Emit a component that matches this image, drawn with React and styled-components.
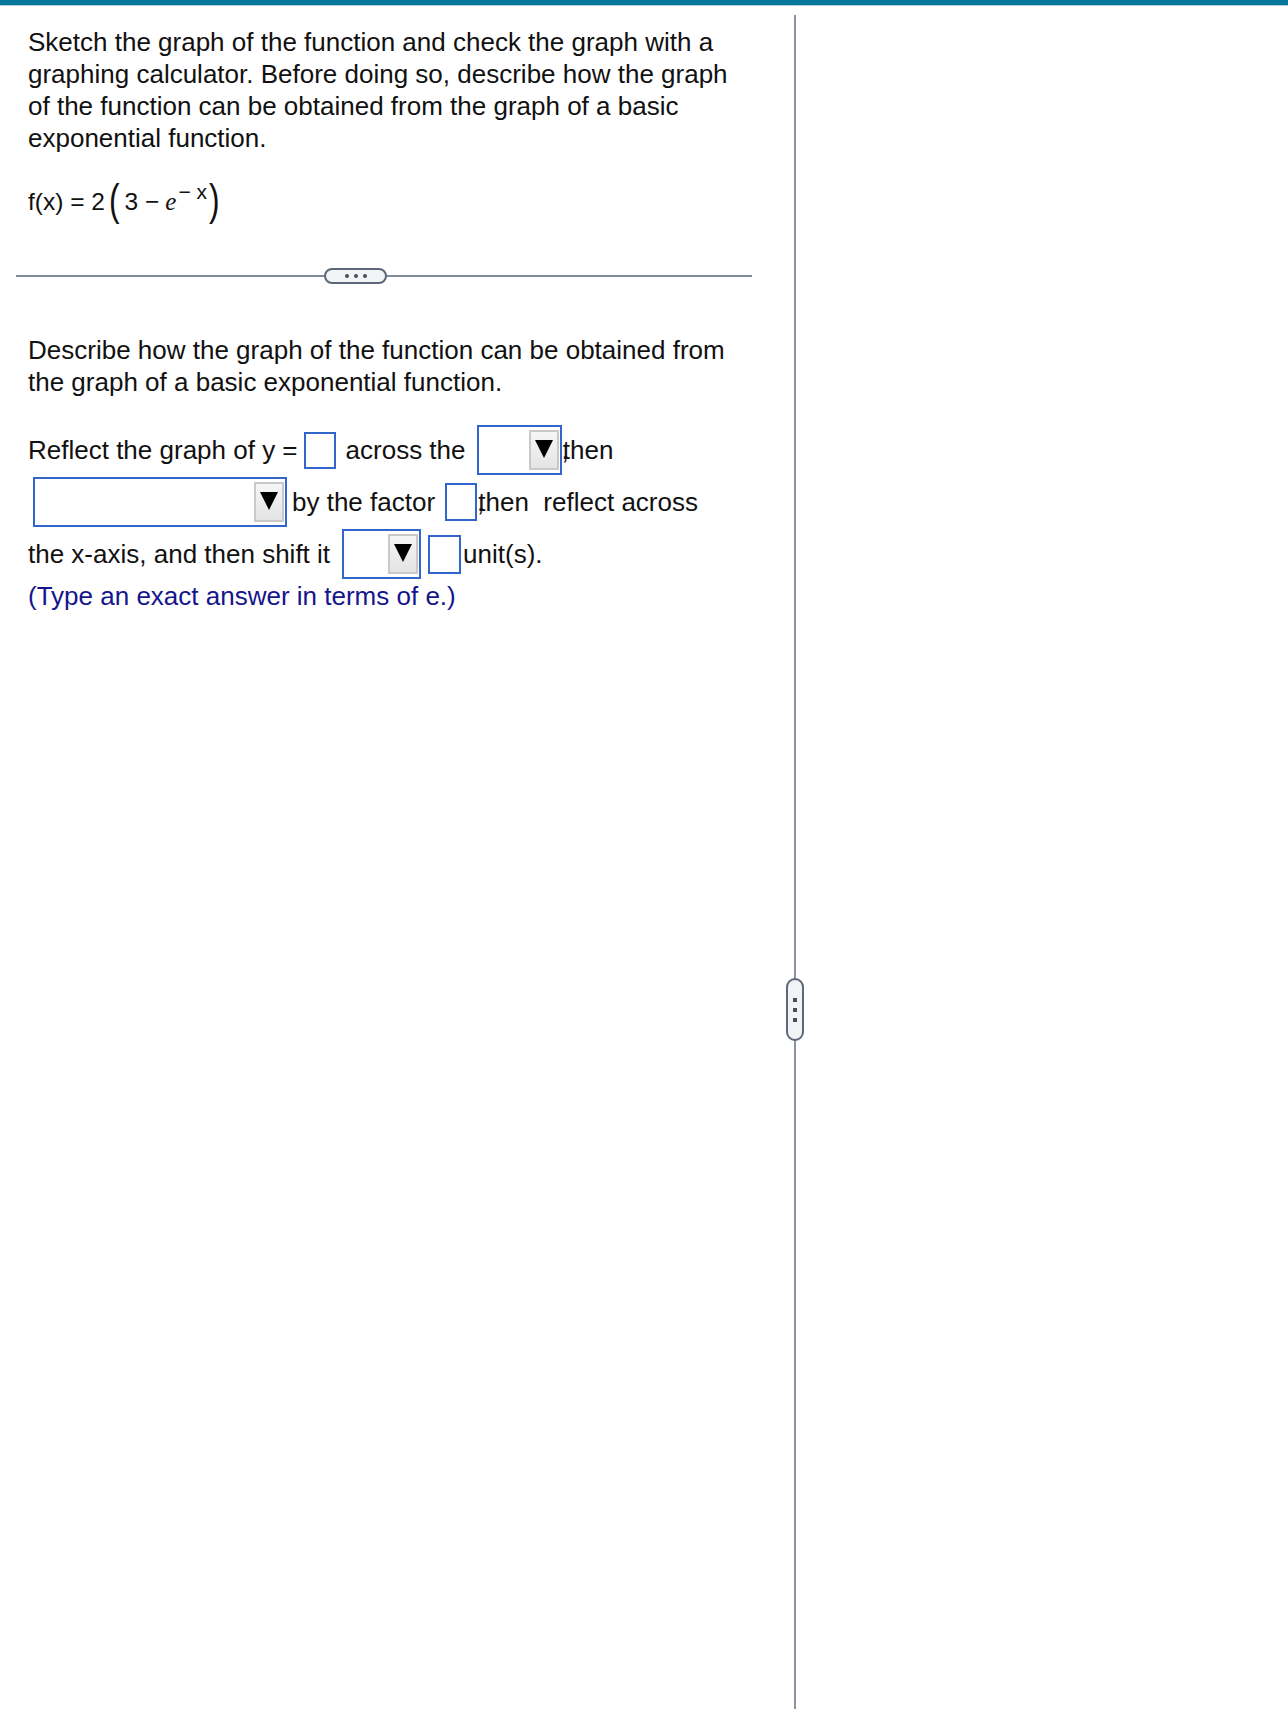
import React from "react";
import styled, { createGlobalStyle } from "styled-components";

const Global = createGlobalStyle`
  html, body { margin: 0; padding: 0; background: #fff; }
  body { font-family: "Liberation Sans", Arial, sans-serif; color: #111; }
`;

const Page = styled.div`
  min-height: 1709px;
  display: flex;
  flex-direction: column;
`;

const TopBar = styled.div`
  height: 5px;
  background: #04789b;
  border-bottom: 1px solid #bccbdc;
  flex: none;
`;

const Body = styled.div`
  flex: 1;
  display: flex;
`;

const LeftPane = styled.div`
  width: 794px;
  padding: 20px 42px 0 16px;
  box-sizing: border-box;
`;

const Divider = styled.div`
  position: relative;
  width: 2px;
  margin-top: 9px;
  background: #8a92a3;
  flex: none;
`;

const VHandle = styled.div`
  position: absolute;
  left: -8px;
  top: 963px;
  width: 14px;
  height: 59px;
  border: 2px solid #5c6878;
  border-radius: 9px;
  background: #f1f3f6;
  display: flex;
  flex-direction: column;
  align-items: center;
  justify-content: center;
  gap: 6px;
`;

const Dot = styled.span`
  width: 4px;
  height: 4px;
  background: #4a4f57;
  border-radius: ${(p) => (p.round ? "50%" : "0")};
`;

const Text = styled.p`
  margin: 0;
  padding-left: 12px;
  font-size: 26px;
  line-height: 32px;
`;

const Formula = styled.div`
  margin: 16px 0 0 12px;
  display: flex;
  align-items: center;
  font-size: 24.5px;
  height: 64px;
`;

const Paren = styled.span`
  font-size: 44px;
  line-height: 1;
  transform: scaleX(0.72);
  display: inline-block;
  margin: ${(p) => (p.left ? "0 3px 0 2px" : "0 0 0 0")};
  position: relative;
  top: -2px;
`;

const ItalicE = styled.span`
  font-family: "Liberation Serif", "Times New Roman", serif;
  font-style: italic;
  font-size: 25px;
  margin-left: 6px;
`;

const Sup = styled.span`
  position: relative;
  top: -10px;
  font-size: 21px;
  margin-left: 2px;
`;

const HrWrap = styled.div`
  position: relative;
  margin-top: 34px;
  height: 16px;
  display: flex;
  align-items: center;
`;

const HrLine = styled.div`
  flex: 1;
  height: 2px;
  background: #7f8898;
`;

const HHandle = styled.div`
  position: absolute;
  left: 308px;
  top: 0;
  width: 59px;
  height: 12px;
  border: 2px solid #5c6878;
  border-radius: 9px;
  background: #f1f3f6;
  display: flex;
  align-items: center;
  justify-content: center;
  gap: 5px;
`;

const Describe = styled(Text)`
  margin-top: 50px;
`;

const Answer = styled.div`
  margin-top: 26px;
  padding-left: 12px;
  font-size: 26px;
`;

const Row = styled.div`
  display: flex;
  align-items: center;
  height: 52px;
  white-space: pre;
  margin-left: ${(p) => p.indent || 0}px;
`;

const Word = styled.span`
  margin-left: ${(p) => p.ml || 0}px;
  margin-right: ${(p) => p.mr || 0}px;
`;

const Box = styled.span`
  display: inline-block;
  box-sizing: border-box;
  width: ${(p) => p.w || 32}px;
  height: ${(p) => p.h || 37}px;
  border: 2px solid #3366cc;
  margin-left: ${(p) => p.ml || 0}px;
  margin-right: ${(p) => p.mr || 0}px;
  background: #fff;
`;

const Select = styled.span`
  display: inline-flex;
  justify-content: flex-end;
  align-items: center;
  box-sizing: border-box;
  width: ${(p) => p.w}px;
  height: 50px;
  border: 2px solid #3366cc;
  padding-right: 1px;
  margin-left: ${(p) => p.ml || 0}px;
  margin-right: ${(p) => p.mr || 0}px;
  background: #fff;
`;

const Arrow = styled.span`
  box-sizing: border-box;
  width: 30px;
  height: 40px;
  border: 2px solid #c9c9c9;
  background: linear-gradient(#f6f6f6, #e4e4e4);
  display: flex;
  align-items: center;
  justify-content: center;
  &::after {
    content: "";
    border-left: 9px solid transparent;
    border-right: 9px solid transparent;
    border-top: 18px solid #000;
    margin-top: -2px;
  }
`;

const Comma = styled.span`
  margin-right: -6px;
`;

const Hint = styled.div`
  color: #15158c;
  margin-top: 0;
  line-height: 32px;
`;

const Dropdown = ({ w, ml, mr }) => (
  <Select w={w} ml={ml} mr={mr}>
    <Arrow />
  </Select>
);

export default function App() {
  return (
    <>
      <Global />
      <Page>
        <TopBar />
        <Body>
          <LeftPane>
            <Text>
              Sketch the graph of the function and check the graph with a
              <br />
              graphing calculator. Before doing so, describe how the graph
              <br />
              of the function can be obtained from the graph of a basic
              <br />
              exponential function.
            </Text>
            <Formula>
              <span>f(x) = 2</span>
              <Paren left>(</Paren>
              <span>3 −</span>
              <ItalicE>e</ItalicE>
              <Sup>− x</Sup>
              <Paren>)</Paren>
            </Formula>
            <HrWrap>
              <HrLine />
              <HHandle>
                <Dot round />
                <Dot round />
                <Dot round />
              </HHandle>
            </HrWrap>
            <Describe>
              Describe how the graph of the function can be obtained from
              <br />
              the graph of a basic exponential function.
            </Describe>
            <Answer>
              <Row>
                <Word>Reflect the graph of y =</Word>
                <Box ml={6} mr={10} />
                <Word>across the</Word>
                <Dropdown w={85} ml={11} />
                <Comma>,</Comma>
                <Word>then</Word>
              </Row>
              <Row indent={5}>
                <Dropdown w={254} mr={5} />
                <Word>by the factor</Word>
                <Box ml={10} h={38} />
                <Comma>,</Comma>
                <Word>then  reflect across</Word>
              </Row>
              <Row>
                <Word>the x-axis, and then shift it</Word>
                <Dropdown w={79} ml={12} mr={7} />
                <Box w={33} h={39} mr={2} />
                <Word>unit(s).</Word>
              </Row>
              <Hint>(Type an exact answer in terms of e.)</Hint>
            </Answer>
          </LeftPane>
          <Divider>
            <VHandle>
              <Dot />
              <Dot />
              <Dot />
            </VHandle>
          </Divider>
        </Body>
      </Page>
    </>
  );
}
